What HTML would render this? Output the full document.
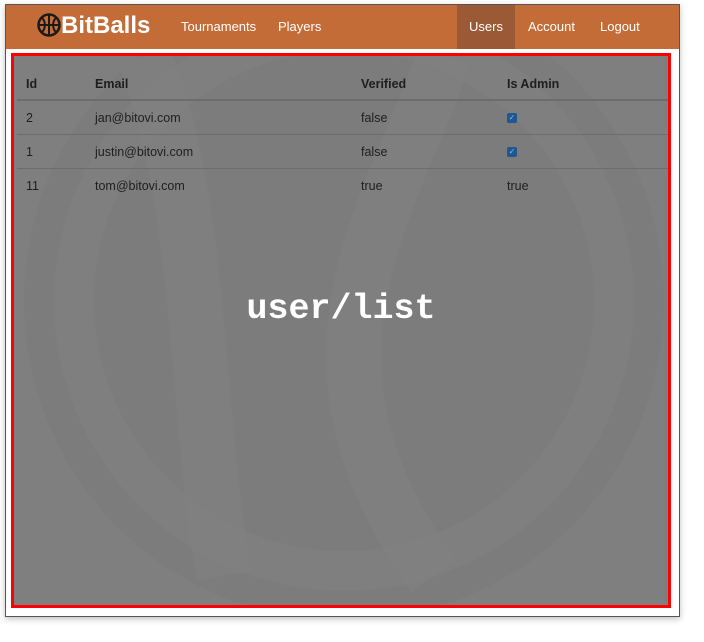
<!DOCTYPE html>
<html><head><style>
body{margin:0;width:704px;height:642px;background:#fff;position:relative;overflow:hidden;font-family:"Liberation Sans",sans-serif}
.frame{position:absolute;left:5px;top:4px;width:673px;height:611px;border:1px solid #555;box-shadow:0 2px 6px rgba(0,0,0,.25);background:#fff}
.nav{position:absolute;left:0;top:0;width:673px;height:44px;background:#c46c37}
.nav a{position:absolute;top:0;height:44px;line-height:44px;color:#fff;font-size:13px;text-decoration:none}
.logo{position:absolute;left:31px;top:6px;color:#fff;font-weight:bold;font-size:24px;line-height:30px}
.box{position:absolute;left:11px;top:53px;width:654px;height:549px;border:3px solid #f00;background:#7f7f7f;overflow:hidden}
table{position:absolute;left:3px;top:12px;width:651px;border-collapse:collapse;font-size:12.5px;color:#1e1e1e}
td,th{text-align:left;padding:0 9px;height:33px;border-bottom:1px solid #6c6c6c}
th{font-weight:bold;height:31px;border-bottom:2px solid #6c6c6c}
tr:last-child td{border-bottom:none}
.cb{display:inline-block;width:10px;height:10px;background:#1f5694;border-radius:2px;color:#9bb;font-size:8px;line-height:10px;text-align:center;vertical-align:middle}
.title{position:absolute;left:0;width:654px;top:233px;text-align:center;font-family:"Liberation Mono",monospace;font-weight:bold;font-size:35px;color:#fff}
</style></head><body>
<div class="frame">
<div class="nav">
<div class="logo"><svg width="24" height="24" viewBox="0 0 24 24" style="vertical-align:-4px"><circle cx="12" cy="12" r="10.5" fill="none" stroke="#1a1a1a" stroke-width="2.5"/><path d="M12 1.5V22.5M1.5 12H22.5M4.5 4.5C9 8 9 16 4.5 19.5M19.5 4.5C15 8 15 16 19.5 19.5" fill="none" stroke="#1a1a1a" stroke-width="2"/></svg>BitBalls</div>
<a style="left:175px">Tournaments</a>
<a style="left:272px">Players</a>
<a style="left:451px;width:58px;background:#9b5a35;text-align:center">Users</a>
<a style="left:522px">Account</a>
<a style="left:594px">Logout</a>
</div>
</div>
<div class="box">
<svg width="654" height="549" style="position:absolute;left:0;top:0">
<circle cx="330" cy="245" r="320" fill="#7c7c7c"/>
<circle cx="330" cy="245" r="270" fill="none" stroke="#818181" stroke-width="40" opacity=".5"/>
<path d="M130 0C190 150 180 350 210 520M430 0C380 150 260 300 420 520" fill="none" stroke="#818181" stroke-width="55" opacity=".5"/>
</svg>
<table>
<tr><th style="width:51px">Id</th><th style="width:248px">Email</th><th style="width:128px">Verified</th><th>Is Admin</th></tr>
<tr><td>2</td><td>jan@bitovi.com</td><td>false</td><td><span class="cb">✓</span></td></tr>
<tr><td>1</td><td>justin@bitovi.com</td><td>false</td><td><span class="cb">✓</span></td></tr>
<tr><td>11</td><td>tom@bitovi.com</td><td>true</td><td>true</td></tr>
</table>
<div class="title">user/list</div>
</div>
</body></html>
